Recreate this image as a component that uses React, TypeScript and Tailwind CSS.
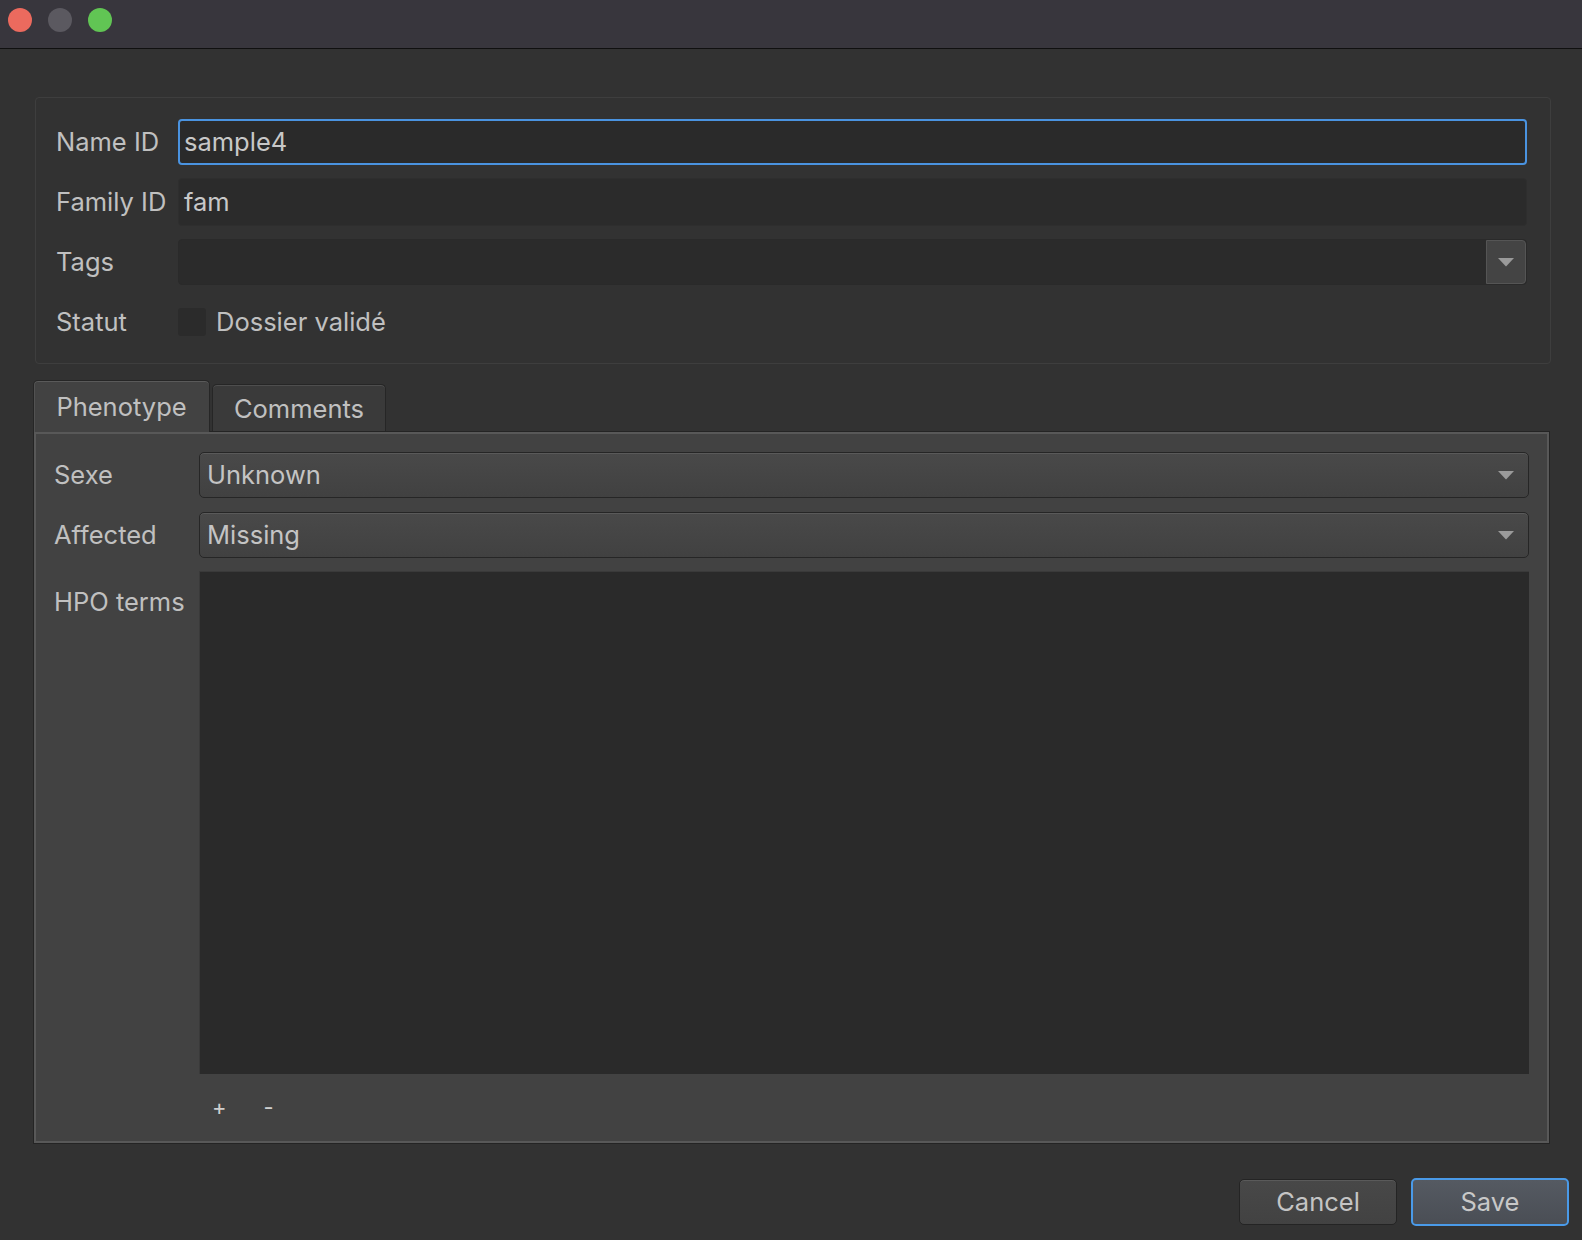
import React from 'react';

function Arrow() {
  return (
    <svg width="16" height="9" viewBox="0 0 16 9" className="block">
      <path d="M0 0 L16 0 L8 8.5 Z" fill="#9a9a9a" />
    </svg>
  );
}

function Combo({ value }: { value: string }) {
  return (
    <div className="flex-1 h-[46px] flex items-center rounded-[5px] border border-[#262626] bg-gradient-to-b from-[#494949] to-[#414141] shadow-[inset_0_1px_0_#5a5a5a] pl-[7px] pr-[14px]">
      <span className="flex-1 text-[#c4c4c4]">{value}</span>
      <Arrow />
    </div>
  );
}

export default function App() {
  return (
    <div className="w-[1582px] h-[1240px] bg-[#323232] flex flex-col text-[25.5px] text-[#c0c0c0] font-['Inter',sans-serif] overflow-hidden">
      {/* title bar */}
      <div className="h-[49px] shrink-0 bg-[#38363d] border-b border-[#101010] flex items-start gap-[16px] pl-[8px] pt-[8px]">
        <span className="w-[24px] h-[24px] rounded-full bg-[#ec6a5e]" />
        <span className="w-[24px] h-[24px] rounded-full bg-[#5b5960]" />
        <span className="w-[24px] h-[24px] rounded-full bg-[#61c554]" />
      </div>

      {/* general info group */}
      <div className="mt-[48px] ml-[35px] w-[1516px] h-[267px] shrink-0 rounded-[4px] border border-[#3e3e3e] pt-[21px] pl-[20px] pr-[23px] flex flex-col">
        <div className="flex items-center h-[46px]">
          <span className="w-[122px]">Name ID</span>
          <div className="flex-1 h-[46px] rounded-[4px] border-2 border-[#4a93e0] bg-[#2a2a2a] flex items-center pl-[4px] text-[#c8c8c8]">
            sample4
          </div>
        </div>
        <div className="flex items-center h-[48px] mt-[13px]">
          <span className="w-[122px]">Family ID</span>
          <div className="flex-1 h-[48px] rounded-[4px] border border-[#2e2e2e] bg-[#2b2b2b] flex items-center pl-[5px] text-[#c8c8c8]">
            fam
          </div>
        </div>
        <div className="flex items-center h-[46px] mt-[13px]">
          <span className="w-[122px]">Tags</span>
          <div className="flex-1 h-[46px] rounded-[4px] border border-[#2a2a2a] bg-[#2b2b2b] flex justify-end">
            <div className="w-[40px] h-full rounded-r-[4px] bg-[#444444] border border-[#555555] flex items-center justify-center">
              <Arrow />
            </div>
          </div>
        </div>
        <div className="flex items-center mt-[18px]">
          <span className="w-[122px]">Statut</span>
          <span className="w-[28px] h-[28px] rounded-[3px] bg-[#2b2b2b]" />
          <span className="ml-[10px]">Dossier validé</span>
        </div>
      </div>

      {/* tabs */}
      <div className="mt-[16px] ml-[33px] w-[1517px] flex flex-col shrink-0">
        <div className="flex items-end h-[51px] relative z-10">
          <div className="w-[177px] h-[52px] -mb-[1px] rounded-t-[5px] border border-b-0 border-[#262626] bg-[#424242] shadow-[inset_0_1px_0_#5a5a5a,inset_1px_0_0_#525252] flex items-center justify-center pt-[1px]">
            Phenotype
          </div>
          <div className="ml-[2px] w-[174px] h-[47px] rounded-t-[5px] border border-b-0 border-[#262626] bg-[#3a3a3a] shadow-[inset_0_1px_0_#4e4e4e] flex items-center justify-center pt-[3px]">
            Comments
          </div>
        </div>
        <div className="h-[713px] border border-[#242424] bg-[#424242] shadow-[inset_0_0_0_2px_#585858] pt-[20px] pl-[20px] pr-[20px] flex flex-col">
          <div className="flex items-center">
            <span className="w-[145px]">Sexe</span>
            <Combo value="Unknown" />
          </div>
          <div className="flex items-center mt-[14px]">
            <span className="w-[145px]">Affected</span>
            <Combo value="Missing" />
          </div>
          <div className="flex mt-[13px]">
            <span className="w-[145px] pt-[12px]">HPO terms</span>
            <div className="flex-1 h-[503px] bg-[#2a2a2a] border-l border-t border-[#3a3a3a]" />
          </div>
          <div className="flex items-center ml-[145px] mt-[21px] h-[24px] text-[22px] text-[#cfcfcf]">
            <span className="ml-[13px]">+</span>
            <span className="ml-[37px]">-</span>
          </div>
        </div>
      </div>

      {/* buttons */}
      <div className="mt-[35px] flex justify-end gap-[14px] pr-[13px]">
        <button className="w-[158px] h-[46px] rounded-[5px] border border-[#242424] bg-gradient-to-b from-[#484848] to-[#424242] shadow-[inset_0_1px_0_#5a5a5a] text-[#c4c4c4]">
          Cancel
        </button>
        <button className="w-[158px] h-[48px] -mt-[1px] rounded-[5px] border-2 border-[#4a9ae8] bg-gradient-to-b from-[#555a62] to-[#4a4e55] text-[#c8c8c8]">
          Save
        </button>
      </div>
    </div>
  );
}
